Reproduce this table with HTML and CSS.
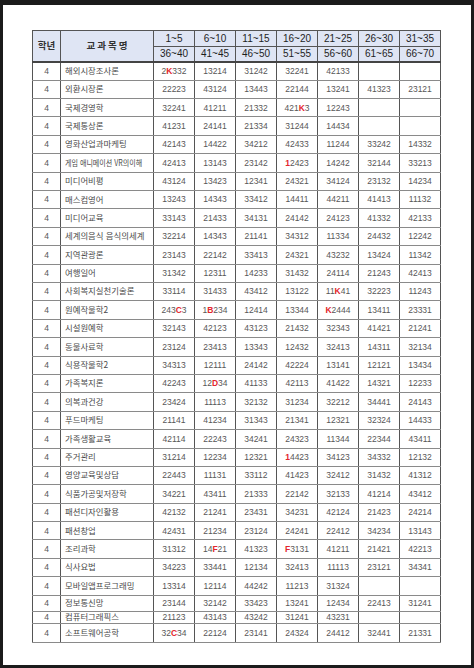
FILE: index.html
```html
<!DOCTYPE html>
<html lang="ko">
<head>
<meta charset="utf-8">
<title>교과목 표</title>
<link rel="stylesheet" href="styles.css">
</head>
<body>
<div class="frame">
<div class="page">
<table class="grid">
<colgroup>
<col class="c-year"><col class="c-name"><col class="c-n"><col class="c-n"><col class="c-n"><col class="c-n"><col class="c-n"><col class="c-n"><col class="c-n">
</colgroup>
<thead>
<tr class="h1">
<th rowspan="2" class="th-year">학년</th>
<th rowspan="2" class="th-name">교과목명</th>
<th>1~5</th><th>6~10</th><th>11~15</th><th>16~20</th><th>21~25</th><th>26~30</th><th>31~35</th>
</tr>
<tr class="h2">
<th>36~40</th><th>41~45</th><th>46~50</th><th>51~55</th><th>56~60</th><th>61~65</th><th>66~70</th>
</tr>
</thead>
<tbody>
<tr class="r"><td>4</td><td class="nm">해외시장조사론</td><td>2<span class="red">K</span>332</td><td>13214</td><td>31242</td><td>32241</td><td>42133</td><td></td><td></td></tr>
<tr class="r"><td>4</td><td class="nm">외환시장론</td><td>22223</td><td>43124</td><td>13443</td><td>22144</td><td>13241</td><td>41323</td><td>23121</td></tr>
<tr class="r"><td>4</td><td class="nm">국제경영학</td><td>32241</td><td>41211</td><td>21332</td><td>421<span class="red">K</span>3</td><td>12243</td><td></td><td></td></tr>
<tr class="r"><td>4</td><td class="nm">국제통상론</td><td>41231</td><td>24141</td><td>21334</td><td>31244</td><td>14434</td><td></td><td></td></tr>
<tr class="r"><td>4</td><td class="nm">영화산업과마케팅</td><td>42143</td><td>14422</td><td>34212</td><td>42433</td><td>11244</td><td>33242</td><td>14332</td></tr>
<tr class="r"><td>4</td><td class="nm"><span class="squeeze">게임 애니메이션 VR의이해</span></td><td>42413</td><td>13143</td><td>23142</td><td><span class="red">1</span>2423</td><td>14242</td><td>32144</td><td>33213</td></tr>
<tr class="r"><td>4</td><td class="nm">미디어비평</td><td>43124</td><td>13423</td><td>12341</td><td>24321</td><td>34124</td><td>23132</td><td>14234</td></tr>
<tr class="r"><td>4</td><td class="nm">매스컴영어</td><td>13243</td><td>14343</td><td>33412</td><td>14411</td><td>44211</td><td>41413</td><td>11132</td></tr>
<tr class="r"><td>4</td><td class="nm">미디어교육</td><td>33143</td><td>21433</td><td>34131</td><td>24142</td><td>24123</td><td>41332</td><td>42133</td></tr>
<tr class="r"><td>4</td><td class="nm">세계의음식 음식의세계</td><td>32214</td><td>14343</td><td>21141</td><td>34312</td><td>11334</td><td>24432</td><td>12242</td></tr>
<tr class="r"><td>4</td><td class="nm">지역관광론</td><td>23143</td><td>22142</td><td>33413</td><td>24321</td><td>43232</td><td>13424</td><td>11342</td></tr>
<tr class="r"><td>4</td><td class="nm">여행일어</td><td>31342</td><td>12311</td><td>14233</td><td>31432</td><td>24114</td><td>21243</td><td>42413</td></tr>
<tr class="r"><td>4</td><td class="nm">사회복지실천기술론</td><td>33114</td><td>31433</td><td>43412</td><td>13122</td><td>11<span class="red">K</span>41</td><td>32223</td><td>11243</td></tr>
<tr class="r"><td>4</td><td class="nm">원예작물학2</td><td>243<span class="red">C</span>3</td><td>1<span class="red">B</span>234</td><td>12414</td><td>13344</td><td><span class="red">K</span>2444</td><td>13411</td><td>23331</td></tr>
<tr class="r"><td>4</td><td class="nm">시설원예학</td><td>32143</td><td>42123</td><td>43123</td><td>21432</td><td>32343</td><td>41421</td><td>21241</td></tr>
<tr class="r"><td>4</td><td class="nm">동물사료학</td><td>23124</td><td>23413</td><td>13343</td><td>12432</td><td>32413</td><td>14311</td><td>32134</td></tr>
<tr class="r"><td>4</td><td class="nm">식용작물학2</td><td>34313</td><td>12111</td><td>24142</td><td>42224</td><td>13141</td><td>12121</td><td>13434</td></tr>
<tr class="r"><td>4</td><td class="nm">가족복지론</td><td>42243</td><td>12<span class="red">D</span>34</td><td>41133</td><td>42113</td><td>41422</td><td>14321</td><td>12233</td></tr>
<tr class="r"><td>4</td><td class="nm">의복과건강</td><td>23424</td><td>11113</td><td>32132</td><td>31234</td><td>32212</td><td>34441</td><td>24143</td></tr>
<tr class="r"><td>4</td><td class="nm">푸드마케팅</td><td>21141</td><td>41234</td><td>31343</td><td>21341</td><td>12321</td><td>32324</td><td>14433</td></tr>
<tr class="r"><td>4</td><td class="nm">가족생활교육</td><td>42114</td><td>22243</td><td>34241</td><td>24323</td><td>11344</td><td>22344</td><td>43411</td></tr>
<tr class="r"><td>4</td><td class="nm">주거관리</td><td>31214</td><td>12234</td><td>12321</td><td><span class="red">1</span>4423</td><td>34123</td><td>34332</td><td>12132</td></tr>
<tr class="r"><td>4</td><td class="nm">영양교육및상담</td><td>22443</td><td>11131</td><td>33112</td><td>41423</td><td>32412</td><td>31432</td><td>41312</td></tr>
<tr class="r"><td>4</td><td class="nm">식품가공및저장학</td><td>34221</td><td>43411</td><td>21333</td><td>22142</td><td>32133</td><td>41214</td><td>43412</td></tr>
<tr class="r"><td>4</td><td class="nm">패션디자인활용</td><td>42132</td><td>21241</td><td>23431</td><td>34231</td><td>42124</td><td>21423</td><td>24214</td></tr>
<tr class="r"><td>4</td><td class="nm">패션창업</td><td>42431</td><td>21234</td><td>23124</td><td>24241</td><td>22412</td><td>34234</td><td>13143</td></tr>
<tr class="r"><td>4</td><td class="nm">조리과학</td><td>31312</td><td>14<span class="red">F</span>21</td><td>41323</td><td><span class="red">F</span>3131</td><td>41211</td><td>21421</td><td>42213</td></tr>
<tr class="r"><td>4</td><td class="nm">식사요법</td><td>34223</td><td>33441</td><td>12134</td><td>32413</td><td>11113</td><td>23121</td><td>34341</td></tr>
<tr class="r"><td>4</td><td class="nm">모바일앱프로그래밍</td><td>13314</td><td>12114</td><td>44242</td><td>11213</td><td>31324</td><td></td><td></td></tr>
<tr class="r30"><td>4</td><td class="nm">정보통신망</td><td>23144</td><td>32142</td><td>33423</td><td>13241</td><td>12434</td><td>22413</td><td>31241</td></tr>
<tr class="r31"><td>4</td><td class="nm">컴퓨터그래픽스</td><td>21123</td><td>43143</td><td>43242</td><td>31241</td><td>43231</td><td></td><td></td></tr>
<tr class="r"><td>4</td><td class="nm">소프트웨어공학</td><td>32<span class="red">C</span>34</td><td>22124</td><td>23141</td><td>24324</td><td>24412</td><td>32441</td><td>21331</td></tr>
</tbody>
</table>
</div>
</div>
</body>
</html>
```

FILE: styles.css
```css
html, body {
  margin: 0;
  padding: 0;
}

body {
  width: 474px;
  height: 668px;
  overflow: hidden;
  font-family: "Liberation Sans", "Noto Sans CJK KR", sans-serif;
}

.frame {
  box-sizing: border-box;
  width: 474px;
  height: 668px;
  background: #1b1b1b;
  padding: 5px 3px 3px 3px;
}

.page {
  box-sizing: border-box;
  height: 660px;
  background: #ffffff;
  padding: 25px 0 0 29px;
}

.grid {
  table-layout: fixed;
  width: 408px;
  border-collapse: collapse;
  border: 1px solid #333;
}

.c-year { width: 28px; }
.c-name { width: 93px; }
.c-n { width: 41px; }

.grid th {
  background: #dfe5f4;
  color: #1e1e1e;
  font-weight: normal;
  font-size: 10px;
  line-height: 1;
  padding: 0;
  text-align: center;
  border: 1px solid #555;
}

.grid thead tr.h2 th {
  border-bottom: 2px solid #444;
}

.grid .th-year,
.grid .th-name {
  font-family: "Noto Sans CJK KR", sans-serif;
  font-size: 9.5px;
  font-weight: bold;
  color: #333;
  border-bottom: 2px solid #444;
}

.grid .th-name {
  letter-spacing: 2px;
  text-indent: 2px;
}

.h1 { height: 16px; }
.h2 { height: 15.3px; }
.r { height: 18.4px; }
.r30 { height: 16.4px; }
.r31 { height: 12.3px; }

.grid td {
  padding: 0;
  font-size: 8.5px;
  line-height: 1;
  color: #575757;
  text-align: center;
  vertical-align: middle;
  border-left: 1px solid #555;
  border-right: 1px solid #555;
  border-top: 1px solid #8a8a8a;
  border-bottom: 1px solid #8a8a8a;
  white-space: nowrap;
  overflow: hidden;
}

.grid td.nm {
  text-align: left;
  padding: 0 0 2px 4px;
  font-family: "Noto Sans CJK KR", sans-serif;
  font-size: 8.4px;
  color: #4a4a4a;
}

.squeeze {
  display: inline-block;
  transform: scaleX(0.84);
  transform-origin: left center;
}

.red {
  color: #e3262c;
  font-weight: bold;
}
```
